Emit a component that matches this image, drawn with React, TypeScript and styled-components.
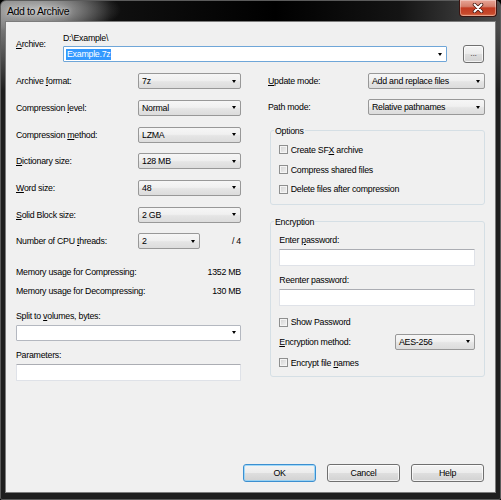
import React from "react";
import styled, { createGlobalStyle } from "styled-components";

const GlobalStyle = createGlobalStyle`
  html, body {
    margin: 0;
    padding: 0;
    width: 501px;
    height: 500px;
    overflow: hidden;
    background: #000;
  }
  * { box-sizing: border-box; }
`;

const Window = styled.div`
  width: 501px;
  height: 500px;
  display: flex;
  flex-direction: column;
  border: 1px solid #5b5b5b;
  border-radius: 6px 6px 2px 2px;
  background:
    radial-gradient(ellipse 80px 24px at 40px 9px, rgba(205, 205, 205, 0.8), rgba(205, 205, 205, 0)),
    linear-gradient(to bottom, rgba(30, 30, 30, 0) 0, rgba(30, 30, 30, 0) 26px, #1e1e1e 90px),
    linear-gradient(to right, #7a7a7a 0, #4d4d4d 12%, #101010 22%, #000 55%, #141414 80%, #4d4d4d 100%);
  font-family: "Liberation Sans", Arial, sans-serif;
`;

const TitleBar = styled.div`
  height: 20px;
  display: flex;
  align-items: flex-start;
  padding: 0 3px 0 6px;
`;

const Title = styled.span`
  line-height: 20px;
  font-size: 10.5px;
  letter-spacing: -0.4px;
  color: #000;
  text-shadow: 0 0 6px rgba(255, 255, 255, 0.7), 0 0 2px rgba(255, 255, 255, 0.5);
`;

const CloseButton = styled.div`
  margin-left: auto;
  margin-top: -1px;
  width: 38px;
  height: 17px;
  display: flex;
  align-items: center;
  justify-content: center;
  border: 1px solid #3b1410;
  border-top: none;
  border-radius: 0 0 4px 4px;
  background: linear-gradient(to bottom, #e8a597 0, #d47f6c 40%, #c23a22 50%, #c74a2c 85%, #e07a55 100%);
  box-shadow: inset 0 0 0 1px rgba(255, 255, 255, 0.35);
`;

const Client = styled.div`
  flex: 1;
  margin: 0 4px 6px 4px;
  border: 1px solid #7c7c7c;
  background: #f0f0f0;
  display: flex;
  flex-direction: column;
  padding: 10px;
  font-size: 8.8px;
  letter-spacing: -0.25px;
  color: #000;
`;

const ArchiveSection = styled.div`
  display: grid;
  grid-template-columns: 47px 384px 1fr;
  grid-template-rows: auto auto;
  row-gap: 2px;
  padding-right: 1px;
`;

const ArchiveLabel = styled.label`
  grid-row: 1 / span 2;
  padding-top: 6px;
  line-height: 12px;
`;

const PathText = styled.div`
  grid-column: 2;
  line-height: 12px;
`;

const Columns = styled.div`
  display: grid;
  grid-template-columns: 225px 217px;
  column-gap: 27px;
  margin-top: 10.3px;
`;

const Column = styled.div`
  display: flex;
  flex-direction: column;
`;

const RowList = styled.div<{ $gap: number }>`
  display: flex;
  flex-direction: column;
  gap: ${(p) => p.$gap}px;
`;

const Row = styled.div<{ $h?: number; $mt?: number }>`
  display: flex;
  align-items: center;
  height: ${(p) => p.$h ?? 16}px;
  margin-top: ${(p) => p.$mt ?? 0}px;
`;

const RowLabel = styled.label<{ $w?: number }>`
  width: ${(p) => (p.$w ? `${p.$w}px` : "auto")};
  flex: ${(p) => (p.$w ? "none" : "1")};
  line-height: 12px;
  white-space: nowrap;
`;

const Value = styled.span`
  flex: 1;
  text-align: right;
  white-space: nowrap;
`;

const Combo = styled.div<{ $w?: number; $editable?: boolean; $focused?: boolean }>`
  width: ${(p) => (p.$w ? `${p.$w}px` : "100%")};
  height: 16px;
  display: flex;
  align-items: center;
  padding: 0 4px 0 3px;
  border: 1px solid ${(p) => (p.$focused ? "#6fa6d8" : p.$editable ? "#b4b8c0" : "#989898")};
  border-radius: ${(p) => (p.$editable ? "1px" : "2px")};
  background: ${(p) =>
    p.$editable
      ? "#fff"
      : "linear-gradient(to bottom, #f6f6f6 0, #f0f0f0 45%, #e5e5e5 55%, #dcdcdc 100%)"};
  white-space: nowrap;
  grid-column: ${(p) => (p.$editable && p.$focused ? "2" : "auto")};
`;

const ComboText = styled.span`
  flex: 1;
  line-height: 12px;
`;

const Selection = styled.span`
  background: #3399ff;
  color: #fff;
  padding: 0 1px;
  margin-left: -1px;
  line-height: 11px;
  display: inline-block;
`;

const Arrow = styled.span`
  width: 0;
  height: 0;
  border-left: 2.5px solid transparent;
  border-right: 2.5px solid transparent;
  border-top: 3px solid #000;
`;

const Field = styled.div<{ $mt: number }>`
  display: flex;
  flex-direction: column;
  gap: 3px;
  margin-top: ${(p) => p.$mt}px;
`;

const FieldLabel = styled.label<{ $mt?: number }>`
  line-height: 12px;
  margin-top: ${(p) => p.$mt ?? 0}px;
`;

const TextBox = styled.div<{ $mt?: number; $h?: number }>`
  height: ${(p) => p.$h ?? 17}px;
  margin-top: ${(p) => p.$mt ?? 0}px;
  background: #fff;
  border: 1px solid #dfe2e8;
  border-top-color: #abadb3;
  border-radius: 1px;
`;

const GroupBox = styled.fieldset<{ $mt: number }>`
  margin: ${(p) => p.$mt}px 0 0 2px;
  padding: 0;
  border: 1px solid #d5dfe5;
  border-radius: 3px;
  min-width: 0;
`;

const GroupTitle = styled.legend`
  margin-left: 3px;
  padding: 0 1px;
  line-height: 12px;
`;

const GroupBody = styled.div<{ $pad: string }>`
  display: flex;
  flex-direction: column;
  padding: ${(p) => p.$pad};
`;

const CheckRow = styled.label<{ $mt?: number }>`
  display: flex;
  align-items: center;
  gap: 2.4px;
  height: 12px;
  margin-top: ${(p) => p.$mt ?? 0}px;
`;

const CheckText = styled.span`
  line-height: 12px;
  white-space: nowrap;
`;

const CheckBox = styled.span`
  width: 9px;
  height: 9px;
  flex: none;
  border: 1px solid #8e8f8f;
  background: linear-gradient(135deg, #d2d2d2 0, #e6e6e6 60%, #f6f6f6 100%);
  box-shadow: inset 0 0 0 1px #f4f4f4;
`;

const Footer = styled.div`
  margin-top: auto;
  display: flex;
  justify-content: flex-end;
  gap: 11px;
  padding-right: 1px;
`;

const Button = styled.button<{ $default?: boolean; $w?: number; $h?: number }>`
  width: ${(p) => p.$w ?? 73}px;
  height: ${(p) => p.$h ?? 18}px;
  padding: 0;
  font-family: inherit;
  font-size: 8.8px;
  letter-spacing: -0.25px;
  color: #000;
  border: 1px solid ${(p) => (p.$default ? "#3c8fd0" : "#707070")};
  border-radius: 3px;
  background: linear-gradient(to bottom, #f4f4f4 0, #ececec 48%, #dedede 52%, #d2d2d2 100%);
  box-shadow: inset 0 0 0 1px ${(p) => (p.$default ? "rgba(140, 210, 250, 0.8)" : "rgba(255, 255, 255, 0.7)")};
`;

const BrowseButton = styled(Button)`
  justify-self: end;
  align-self: start;
  margin-top: -1px;
  color: #555;
  line-height: 8px;
  padding-bottom: 3px;
`;

const leftRows: { label: React.ReactNode; value: string }[] = [
  { label: <>Archive <u>f</u>ormat:</>, value: "7z" },
  { label: <>Compression <u>l</u>evel:</>, value: "Normal" },
  { label: <>Compression <u>m</u>ethod:</>, value: "LZMA" },
  { label: <><u>D</u>ictionary size:</>, value: "128 MB" },
  { label: <><u>W</u>ord size:</>, value: "48" },
  { label: <><u>S</u>olid Block size:</>, value: "2 GB" },
];

const CloseGlyph = () => (
  <svg width="12" height="10" viewBox="0 0 12 10">
    <path d="M2.5 1.5 L9.5 8.5 M9.5 1.5 L2.5 8.5" stroke="#4a1a12" strokeWidth="3.6" strokeLinecap="round" />
    <path d="M2.5 1.5 L9.5 8.5 M9.5 1.5 L2.5 8.5" stroke="#fff" strokeWidth="2" strokeLinecap="round" />
  </svg>
);

const Check = ({ mt, children }: { mt?: number; children: React.ReactNode }) => (
  <CheckRow $mt={mt}>
    <CheckBox />
    <CheckText>{children}</CheckText>
  </CheckRow>
);

export default function App() {
  return (
    <>
      <GlobalStyle />
      <Window>
        <TitleBar>
          <Title>Add to Archive</Title>
          <CloseButton>
            <CloseGlyph />
          </CloseButton>
        </TitleBar>
        <Client>
          <ArchiveSection>
            <ArchiveLabel>
              <u>A</u>rchive:
            </ArchiveLabel>
            <PathText>D:\Example\</PathText>
            <Combo $editable $focused>
              <ComboText>
                <Selection>Example.7z</Selection>
              </ComboText>
              <Arrow />
            </Combo>
            <BrowseButton $w={21} $h={18}>...</BrowseButton>
          </ArchiveSection>

          <Columns>
            <Column>
              <RowList $gap={10.67}>
                {leftRows.map((r, i) => (
                  <Row key={i}>
                    <RowLabel $w={122}>{r.label}</RowLabel>
                    <Combo $w={103}>
                      <ComboText>{r.value}</ComboText>
                      <Arrow />
                    </Combo>
                  </Row>
                ))}
                <Row>
                  <RowLabel $w={122}>
                    Number of CPU <u>t</u>hreads:
                  </RowLabel>
                  <Combo $w={62}>
                    <ComboText>2</ComboText>
                    <Arrow />
                  </Combo>
                  <Value>/ 4</Value>
                </Row>
              </RowList>

              <RowList $gap={7.3}>
                <Row $h={12} $mt={16.4}>
                  <RowLabel>Memory usage for Compressing:</RowLabel>
                  <Value>1352 MB</Value>
                </Row>
                <Row $h={12}>
                  <RowLabel>Memory usage for Decompressing:</RowLabel>
                  <Value>130 MB</Value>
                </Row>
              </RowList>

              <Field $mt={13}>
                <FieldLabel>
                  Split to <u>v</u>olumes, bytes:
                </FieldLabel>
                <Combo $editable>
                  <ComboText />
                  <Arrow />
                </Combo>
              </Field>

              <Field $mt={8}>
                <FieldLabel>Parameters:</FieldLabel>
                <TextBox $h={17.5} />
              </Field>
            </Column>

            <Column>
              <RowList $gap={10}>
                <Row>
                  <RowLabel $w={100}>
                    <u>U</u>pdate mode:
                  </RowLabel>
                  <Combo $w={117}>
                    <ComboText>Add and replace files</ComboText>
                    <Arrow />
                  </Combo>
                </Row>
                <Row>
                  <RowLabel $w={100}>Path mode:</RowLabel>
                  <Combo $w={117}>
                    <ComboText>Relative pathnames</ComboText>
                    <Arrow />
                  </Combo>
                </Row>
              </RowList>

              <GroupBox $mt={9.4}>
                <GroupTitle>Options</GroupTitle>
                <GroupBody $pad="7.3px 8px 8.5px 8.3px">
                  <Check>
                    Create SF<u>X</u> archive
                  </Check>
                  <Check mt={7.6}>Compress shared files</Check>
                  <Check mt={7.6}>Delete files after compression</Check>
                </GroupBody>
              </GroupBox>

              <GroupBox $mt={11}>
                <GroupTitle>Encryption</GroupTitle>
                <GroupBody $pad="6px 9px 6.7px 8.3px">
                  <FieldLabel>
                    Enter <u>p</u>assword:
                  </FieldLabel>
                  <TextBox $mt={3.3} />
                  <FieldLabel $mt={8}>Reenter password:</FieldLabel>
                  <TextBox $mt={3} />
                  <Check mt={10.3}>Show Password</Check>
                  <Row $mt={5.7}>
                    <RowLabel>
                      <u>E</u>ncryption method:
                    </RowLabel>
                    <Combo $w={80}>
                      <ComboText>AES-256</ComboText>
                      <Arrow />
                    </Combo>
                  </Row>
                  <Check mt={7}>
                    Encrypt file <u>n</u>ames
                  </Check>
                </GroupBody>
              </GroupBox>
            </Column>
          </Columns>

          <Footer>
            <Button $default>OK</Button>
            <Button>Cancel</Button>
            <Button>Help</Button>
          </Footer>
        </Client>
      </Window>
    </>
  );
}
